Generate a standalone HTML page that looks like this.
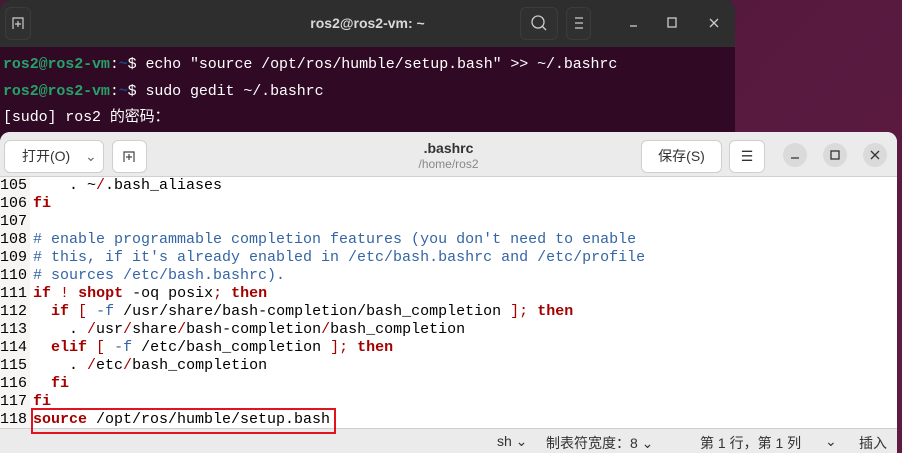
<!DOCTYPE html>
<html><head><meta charset="utf-8"><style>
*{margin:0;padding:0;box-sizing:border-box}
body{width:902px;height:453px;overflow:hidden;background:linear-gradient(135deg,#4d1536,#5e1c44);position:relative;font-family:"Liberation Sans","Noto Sans CJK SC",sans-serif}
#term{position:absolute;left:0;top:0;width:735px;height:140px;background:#300a24;border-radius:10px 10px 0 0;overflow:hidden}
#tbar{height:47px;background:#2e2e2e;position:relative;color:#ddd}
.tb{position:absolute;top:7px;height:33px;border:1px solid #3c3c3c;background:#303030;border-radius:6px}
#ttl{position:absolute;left:0;right:0;top:15px;text-align:center;font-weight:bold;font-size:14px;color:#d8d8d8}
#tt{position:absolute;left:3px;top:52px;font-family:"Liberation Mono","Noto Sans CJK SC",monospace;font-size:15px;letter-spacing:-0.1px;color:#fff;line-height:26.5px;white-space:pre}
.g{color:#26a269;font-weight:bold}.b{color:#12488b;font-weight:bold}
#ged{position:absolute;left:0;top:132px;width:897px;height:321px;background:#fff;border-radius:10px 10px 0 0;overflow:hidden}
#hb{height:45px;background:#ebebeb;border-bottom:1px solid #d0d0d0;position:relative}
.btn{position:absolute;top:8px;height:33px;border:1px solid #cfcfcf;background:#fff;border-radius:6px;font-size:14px;color:#333;line-height:31px;text-align:center}
.cb{position:absolute;top:11px;width:24px;height:24px;border-radius:12px;background:#dadada;color:#333;font-size:13px;text-align:center;line-height:24px}
#code{position:absolute;left:0;top:45px;font-family:"Liberation Mono",monospace;font-size:15px;line-height:18px;white-space:pre;color:#000}
.n{display:inline-block;width:33px}
#gut{position:absolute;left:0;top:45px;width:30px;height:252px;background:#f6f5f4}
.k{color:#a40000;font-weight:bold}.r{color:#a40000}.c{color:#3465a4}
#sb{position:absolute;left:0;top:296px;width:897px;height:25px;background:#ebebeb;border-top:1px solid #cfcfcf;font-size:14px;color:#333}
#sb span{position:absolute;top:4px}
</style></head><body>
<div id="term">
<div id="tbar">
<div class="tb" style="left:5px;width:26px"><svg width="24" height="31" viewBox="0 0 24 31"><path d="M7 21V10h10v11M12 13v6M9 16h6" stroke="#ccc" fill="none" stroke-width="1.2"/></svg></div>
<div id="ttl">ros2@ros2-vm: ~</div>
<div class="tb" style="left:520px;width:38px"><svg width="36" height="31"><circle cx="17" cy="14" r="6" stroke="#ccc" fill="none" stroke-width="1.3"/><path d="M21 18l4 4" stroke="#ccc" stroke-width="1.3"/></svg></div>
<div class="tb" style="left:566px;width:25px"><svg width="24" height="31"><path d="M8 10h8M8 15h8M8 20h8" stroke="#ccc" stroke-width="1.2"/></svg></div>
<svg style="position:absolute;left:630px;top:14px" width="100" height="20"><path d="M0 12h7" stroke="#ccc" stroke-width="1.3"/><rect x="38" y="4" width="8" height="9" stroke="#ccc" fill="none" stroke-width="1.3"/><path d="M80 5l8 8M88 5l-8 8" stroke="#ccc" stroke-width="1.3"/></svg>
</div>
<div id="tt"><span class="g">ros2@ros2-vm</span>:<span class="b">~</span>$ echo "source /opt/ros/humble/setup.bash" &gt;&gt; ~/.bashrc
<span class="g">ros2@ros2-vm</span>:<span class="b">~</span>$ sudo gedit ~/.bashrc
[sudo] ros2 的密码：</div>
</div>
<div id="ged">
<div id="hb">
<div class="btn" style="left:4px;width:100px;text-align:left;padding-left:17px">打开(O) <span style="position:absolute;left:80px;color:#666">⌄</span></div>
<div class="btn" style="left:112px;width:35px"><svg width="33" height="31"><path d="M11 21V11h10v10M16 13v6M13 16h6" stroke="#444" fill="none" stroke-width="1.2"/></svg></div>
<div style="position:absolute;left:0;right:0;top:8px;text-align:center;font-weight:bold;font-size:14px;color:#333">.bashrc</div>
<div style="position:absolute;left:0;right:0;top:25px;text-align:center;font-size:12px;color:#888">/home/ros2</div>
<div class="btn" style="left:641px;width:81px">保存(S)</div>
<div class="btn" style="left:729px;width:36px">☰</div>
<div class="cb" style="left:783px"><svg width="24" height="24"><path d="M8 15h8" stroke="#333" stroke-width="1.3"/></svg></div>
<div class="cb" style="left:823px"><svg width="24" height="24"><rect x="8" y="8" width="8" height="8" stroke="#333" fill="none" stroke-width="1.3"/></svg></div>
<div class="cb" style="left:863px"><svg width="24" height="24"><path d="M8 8l8 8M16 8l-8 8" stroke="#333" stroke-width="1.3"/></svg></div>
</div>
<div id="gut"></div>
<div id="code"><span class="n">105</span>    . ~<span class="r">/</span>.bash_aliases
<span class="n">106</span><span class="k">fi</span>
<span class="n">107</span>
<span class="n">108</span><span class="c"># enable programmable completion features (you don't need to enable</span>
<span class="n">109</span><span class="c"># this, if it's already enabled in /etc/bash.bashrc and /etc/profile</span>
<span class="n">110</span><span class="c"># sources /etc/bash.bashrc).</span>
<span class="n">111</span><span class="k">if</span> <span class="r">!</span> <span class="k">shopt</span> -oq posix<span class="r">;</span> <span class="k">then</span>
<span class="n">112</span>  <span class="k">if</span> <span class="r">[</span> <span class="c">-f</span> /usr/share/bash-completion/bash_completion <span class="r">];</span> <span class="k">then</span>
<span class="n">113</span>    . <span class="r">/</span>usr<span class="r">/</span>share<span class="r">/</span>bash-completion<span class="r">/</span>bash_completion
<span class="n">114</span>  <span class="k">elif</span> <span class="r">[</span> <span class="c">-f</span> /etc/bash_completion <span class="r">];</span> <span class="k">then</span>
<span class="n">115</span>    . <span class="r">/</span>etc<span class="r">/</span>bash_completion
<span class="n">116</span>  <span class="k">fi</span>
<span class="n">117</span><span class="k">fi</span>
<span class="n">118</span><span class="k">source</span> /opt/ros/humble/setup.bash</div>
<div id="sb">
<span style="left:497px">sh ⌄</span>
<span style="left:546px">制表符宽度：8 ⌄</span>
<span style="left:700px">第 1 行，第 1 列</span>
<span style="left:825px">⌄</span>
<span style="left:859px">插入</span>
</div>
<div style="position:absolute;left:31px;top:276px;width:305px;height:26px;border:2px solid #e0141e"></div>
</div>
</body></html>
